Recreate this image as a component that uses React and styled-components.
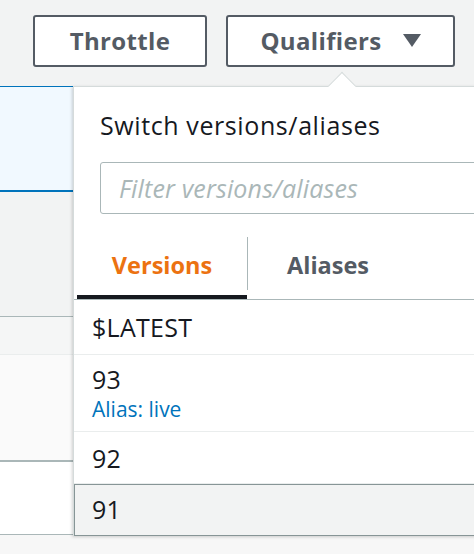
import React from "react";
import styled, { createGlobalStyle } from "styled-components";

const GlobalStyle = createGlobalStyle`
  html, body { margin: 0; padding: 0; }
  body { font-family: "Open Sans", "Noto Sans", sans-serif; background: #ffffff; }
  * { box-sizing: border-box; }
`;

const Page = styled.div`
  position: relative;
  width: 474px;
  height: 554px;
  overflow: hidden;
  display: flex;
  flex-direction: column;
  background: #f2f3f3;
`;

const TopBar = styled.div`
  height: 86px;
  flex: none;
  display: flex;
  justify-content: flex-end;
  align-items: flex-start;
  gap: 19px;
  padding: 15px 19px 0 0;
  background: #f2f3f3;
`;

const Button = styled.button`
  width: ${(p) => p.$w}px;
  height: 52px;
  display: flex;
  align-items: center;
  justify-content: center;
  gap: 21px;
  background: #ffffff;
  border: 2px solid #545b64;
  border-radius: 3px;
  color: #545b64;
  font-family: "Open Sans", "Noto Sans", sans-serif;
  font-weight: 700;
  font-size: 24px;
  letter-spacing: 0.35px;
  padding: 0 0 1px;
`;

const Band = styled.div`
  height: ${(p) => (p.$h ? `${p.$h}px` : "auto")};
  flex: ${(p) => (p.$h ? "none" : "1")};
  background: ${(p) => p.$bg};
  border-top: ${(p) => p.$top || "none"};
  border-bottom: ${(p) => p.$bottom || "none"};
`;

const Popover = styled.div`
  position: absolute;
  left: 73px;
  top: 86px;
  width: 430px;
  height: 450px;
  background: #ffffff;
  border-top: 1px solid #d5dbdb;
  border-left: 1px solid #d5dbdb;
  box-shadow: -1px 1px 3px rgba(0, 0, 0, 0.18);
  display: flex;
  flex-direction: column;
`;

const Caret = styled.div`
  position: absolute;
  left: 258px;
  top: -11px;
  width: 20px;
  height: 20px;
  background: #ffffff;
  border-top: 1px solid #d5dbdb;
  border-left: 1px solid #d5dbdb;
  transform: rotate(45deg);
`;

const Title = styled.div`
  padding: 22px 0 0 26px;
  height: 75px;
  font-size: 25px;
  line-height: 32px;
  letter-spacing: 0.6px;
  color: #16191f;
`;

const FilterInput = styled.input`
  margin-left: 26px;
  width: 400px;
  height: 52px;
  flex: none;
  border: 1px solid #aab7b8;
  border-radius: 3px;
  padding: 0 18px;
  font-family: "Open Sans", "Noto Sans", sans-serif;
  font-size: 25px;
  letter-spacing: 0.15px;
  color: #16191f;
  outline: none;
  &::placeholder {
    color: #aab7b8;
    font-style: italic;
  }
`;

const Tabs = styled.div`
  margin-top: 19px;
  height: 67px;
  flex: none;
  display: flex;
  align-items: stretch;
  padding-left: 3px;
  border-bottom: 1px solid #aab7b8;
`;

const Tab = styled.div`
  width: ${(p) => p.$w}px;
  display: flex;
  align-items: center;
  justify-content: center;
  padding-top: 2px;
  font-size: 23.5px;
  font-weight: 700;
  color: ${(p) => (p.$active ? "#ec7211" : "#545b64")};
  border-bottom: 4px solid ${(p) => (p.$active ? "#16191f" : "transparent")};
`;

const TabDivider = styled.div`
  width: 1px;
  margin: 4px 0 9px;
  background: #aab7b8;
`;

const Item = styled.div`
  height: ${(p) => p.$h}px;
  flex: none;
  display: flex;
  flex-direction: column;
  justify-content: center;
  padding-left: 18px;
  padding-bottom: ${(p) => (p.$hl ? "2px" : "0")};
  border-bottom: 1px solid #eaeded;
  background: ${(p) => (p.$hl ? "#f2f3f3" : "#ffffff")};
  ${(p) => (p.$hl ? "border: 1px solid #879596; padding-left: 17px;" : "")}
`;

const ItemLabel = styled.div`
  font-size: 25px;
  line-height: 30px;
  letter-spacing: 0.3px;
  color: #16191f;
`;

const AliasText = styled.div`
  margin-top: 2px;
  font-size: 21px;
  line-height: 26px;
  color: #0073bb;
`;

export default function App() {
  return (
    <>
      <GlobalStyle />
      <Page>
        <TopBar>
          <Button $w={174}>Throttle</Button>
          <Button $w={229}>
            Qualifiers
            <svg width="18" height="13" viewBox="0 0 18 13">
              <path d="M0 0 H18 L9 13 Z" fill="#545b64" />
            </svg>
          </Button>
        </TopBar>
        <Band $h={106} $bg="#f1f9ff" $top="1px solid #0073bb" $bottom="2px solid #0073bb" />
        <Band $h={125} $bg="#f2f3f3" $bottom="1px solid #aab7b8" />
        <Band $h={38} $bg="#f5f6f6" $bottom="1px solid #eaeded" />
        <Band $h={107} $bg="#fafafa" $bottom="2px solid #aab7b8" />
        <Band $h={73} $bg="#ffffff" $bottom="1px solid #aab7b8" />
        <Band $bg="#f7f7f7" />
        <Popover>
          <Caret />
          <Title>Switch versions/aliases</Title>
          <FilterInput placeholder="Filter versions/aliases" readOnly />
          <Tabs>
            <Tab $w={170} $active>Versions</Tab>
            <TabDivider />
            <Tab $w={160}>Aliases</Tab>
          </Tabs>
          <Item $h={55}>
            <ItemLabel>$LATEST</ItemLabel>
          </Item>
          <Item $h={77}>
            <ItemLabel>93</ItemLabel>
            <AliasText>Alias: live</AliasText>
          </Item>
          <Item $h={52}>
            <ItemLabel>92</ItemLabel>
          </Item>
          <Item $h={52} $hl>
            <ItemLabel>91</ItemLabel>
          </Item>
        </Popover>
      </Page>
    </>
  );
}
